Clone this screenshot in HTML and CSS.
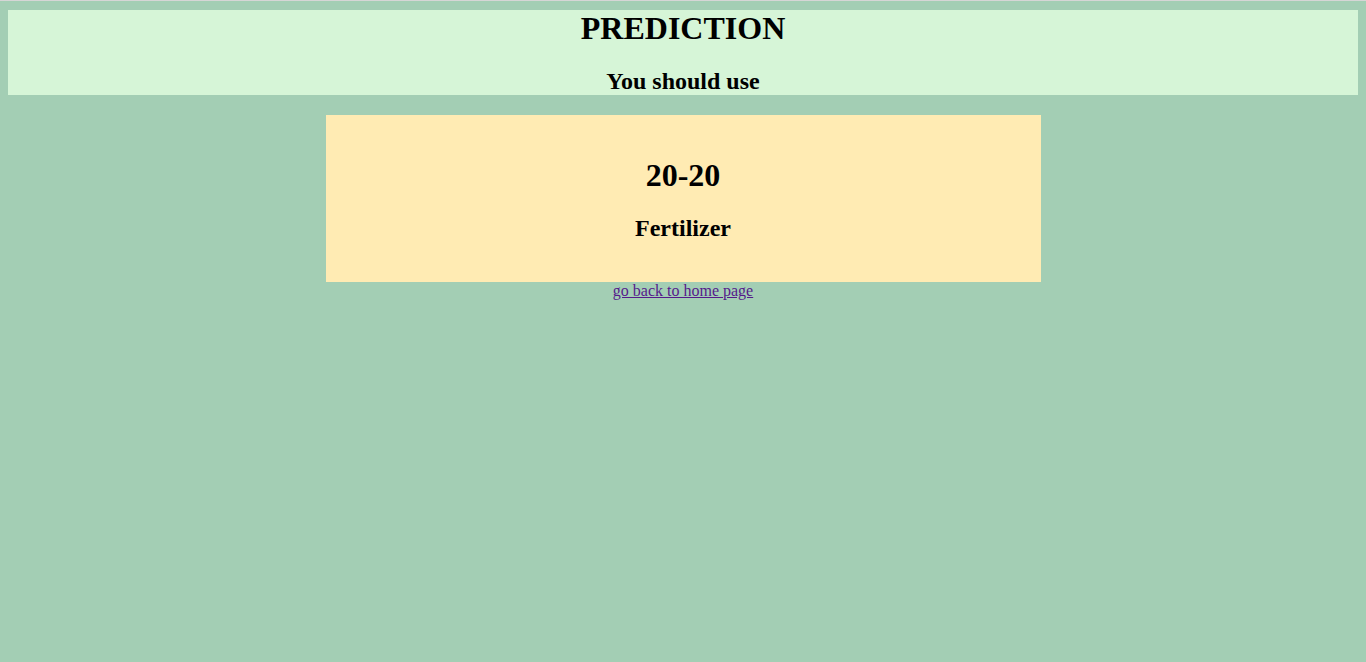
FILE: index.html
```html
<!DOCTYPE html>
<html lang="en">
<head>
<meta charset="utf-8">
<title>Prediction</title>
<link rel="stylesheet" href="styles.css">
</head>
<body>
<div class="header">
  <h1 class="title">PREDICTION</h1>
  <h2 class="subtitle">You should use</h2>
</div>
<div class="result">
  <h1 class="result-name">20-20</h1>
  <h2 class="result-kind">Fertilizer</h2>
</div>
<div class="back">
  <a class="back-link" href="#">go back to home page</a>
</div>
</body>
</html>
```
FILE: styles.css
```css
html {
  border-top: 1px solid #d6d6d6;
  background: #a3ceb4;
}
body {
  margin: 8px;
  background: #a3ceb4;
  font-family: "Liberation Serif", "Times New Roman", serif;
  color: #000;
}
.header {
  margin-top: 1px;
  background: #d6f5d7;
  text-align: center;
}
.title {
  margin: 0;
  font-size: 32px;
  font-weight: bold;
}
.subtitle {
  margin: 21px 0 0.83em;
  font-size: 24px;
  font-weight: bold;
}
.result {
  width: 50%;
  margin: 0 auto;
  padding: 20px;
  background: #ffebb3;
  text-align: center;
}
.result-name {
  margin: 22.5px 0 20.5px;
  font-size: 32px;
  font-weight: bold;
}
.result-kind {
  margin: 0.83em 0;
  font-size: 24px;
  font-weight: bold;
}
.back {
  text-align: center;
  font-size: 16px;
}
.back-link {
  color: #551a8b;
  text-decoration: underline;
}
```
